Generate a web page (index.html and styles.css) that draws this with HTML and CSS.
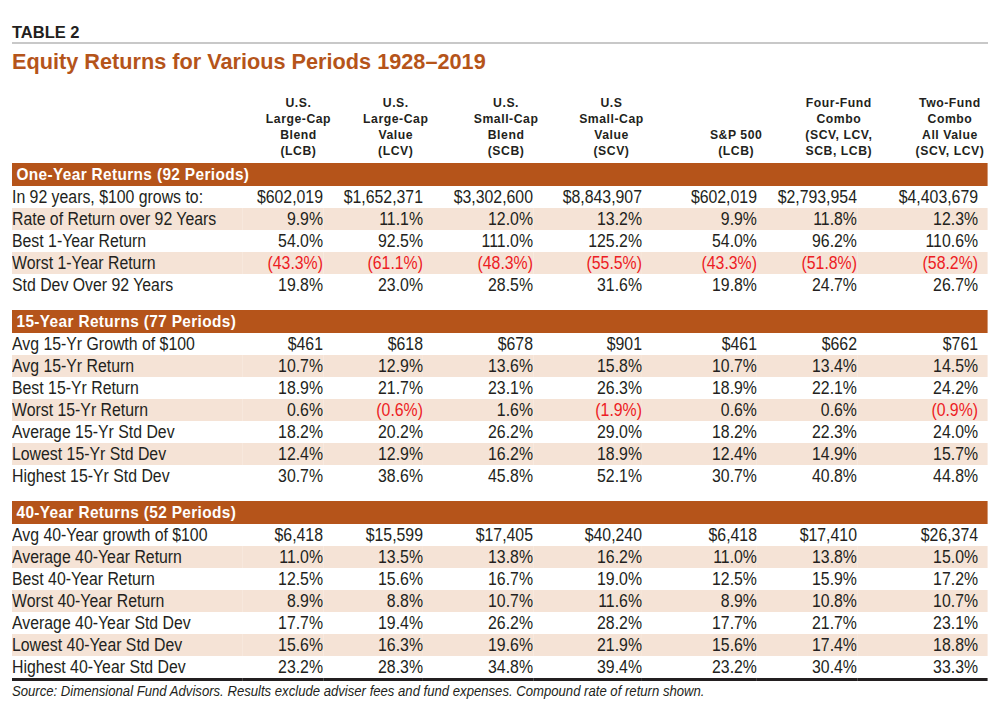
FILE: index.html
```html
<!DOCTYPE html>
<html>
<head>
<meta charset="utf-8">
<link rel="stylesheet" href="styles.css">
</head>
<body>
<div class="page">
  <div class="kicker">TABLE 2</div>
  <h1 class="title">Equity Returns for Various Periods 1928–2019</h1>
  <div class="condensed">
  <table class="data">
    <colgroup>
      <col class="c-label"><col class="c1"><col class="c2"><col class="c3"><col class="c4"><col class="c5"><col class="c6"><col class="c7">
    </colgroup>
    <thead>
      <tr class="head">
        <th></th>
        <th class="h1"><span>U.S.<br>Large-Cap<br>Blend<br>(LCB)</span></th>
        <th><span>U.S.<br>Large-Cap<br>Value<br>(LCV)</span></th>
        <th><span>U.S.<br>Small-Cap<br>Blend<br>(SCB)</span></th>
        <th class="h4"><span>U.S<br>Small-Cap<br>Value<br>(SCV)</span></th>
        <th><span>S&amp;P 500<br>(LCB)</span></th>
        <th class="h6"><span>Four-Fund<br>Combo<br>(SCV, LCV,<br>SCB, LCB)</span></th>
        <th><span>Two-Fund<br>Combo<br>All Value<br>(SCV, LCV)</span></th>
      </tr>
    </thead>
    <tbody>
      <tr class="section"><td colspan="8">One-Year Returns (92 Periods)</td></tr>
      <tr><td>In 92 years, $100 grows to:</td><td>$602,019</td><td>$1,652,371</td><td>$3,302,600</td><td>$8,843,907</td><td>$602,019</td><td>$2,793,954</td><td>$4,403,679</td></tr>
      <tr class="alt"><td>Rate of Return over 92 Years</td><td>9.9%</td><td>11.1%</td><td>12.0%</td><td>13.2%</td><td>9.9%</td><td>11.8%</td><td>12.3%</td></tr>
      <tr><td>Best 1-Year Return</td><td>54.0%</td><td>92.5%</td><td>111.0%</td><td>125.2%</td><td>54.0%</td><td>96.2%</td><td>110.6%</td></tr>
      <tr class="alt"><td>Worst 1-Year Return</td><td class="neg">(43.3%)</td><td class="neg">(61.1%)</td><td class="neg">(48.3%)</td><td class="neg">(55.5%)</td><td class="neg">(43.3%)</td><td class="neg">(51.8%)</td><td class="neg">(58.2%)</td></tr>
      <tr><td>Std Dev Over 92 Years</td><td>19.8%</td><td>23.0%</td><td>28.5%</td><td>31.6%</td><td>19.8%</td><td>24.7%</td><td>26.7%</td></tr>
      <tr class="spacer"><td colspan="8"></td></tr>
      <tr class="section"><td colspan="8">15-Year Returns (77 Periods)</td></tr>
      <tr><td>Avg 15-Yr Growth of $100</td><td>$461</td><td>$618</td><td>$678</td><td>$901</td><td>$461</td><td>$662</td><td>$761</td></tr>
      <tr class="alt"><td>Avg 15-Yr Return</td><td>10.7%</td><td>12.9%</td><td>13.6%</td><td>15.8%</td><td>10.7%</td><td>13.4%</td><td>14.5%</td></tr>
      <tr><td>Best 15-Yr Return</td><td>18.9%</td><td>21.7%</td><td>23.1%</td><td>26.3%</td><td>18.9%</td><td>22.1%</td><td>24.2%</td></tr>
      <tr class="alt"><td>Worst 15-Yr Return</td><td>0.6%</td><td class="neg">(0.6%)</td><td>1.6%</td><td class="neg">(1.9%)</td><td>0.6%</td><td>0.6%</td><td class="neg">(0.9%)</td></tr>
      <tr><td>Average 15-Yr Std Dev</td><td>18.2%</td><td>20.2%</td><td>26.2%</td><td>29.0%</td><td>18.2%</td><td>22.3%</td><td>24.0%</td></tr>
      <tr class="alt"><td>Lowest 15-Yr Std Dev</td><td>12.4%</td><td>12.9%</td><td>16.2%</td><td>18.9%</td><td>12.4%</td><td>14.9%</td><td>15.7%</td></tr>
      <tr><td>Highest 15-Yr Std Dev</td><td>30.7%</td><td>38.6%</td><td>45.8%</td><td>52.1%</td><td>30.7%</td><td>40.8%</td><td>44.8%</td></tr>
      <tr class="spacer"><td colspan="8"></td></tr>
      <tr class="section"><td colspan="8">40-Year Returns (52 Periods)</td></tr>
      <tr><td>Avg 40-Year growth of $100</td><td>$6,418</td><td>$15,599</td><td>$17,405</td><td>$40,240</td><td>$6,418</td><td>$17,410</td><td>$26,374</td></tr>
      <tr class="alt"><td>Average 40-Year Return</td><td>11.0%</td><td>13.5%</td><td>13.8%</td><td>16.2%</td><td>11.0%</td><td>13.8%</td><td>15.0%</td></tr>
      <tr><td>Best 40-Year Return</td><td>12.5%</td><td>15.6%</td><td>16.7%</td><td>19.0%</td><td>12.5%</td><td>15.9%</td><td>17.2%</td></tr>
      <tr class="alt"><td>Worst 40-Year Return</td><td>8.9%</td><td>8.8%</td><td>10.7%</td><td>11.6%</td><td>8.9%</td><td>10.8%</td><td>10.7%</td></tr>
      <tr><td>Average 40-Year Std Dev</td><td>17.7%</td><td>19.4%</td><td>26.2%</td><td>28.2%</td><td>17.7%</td><td>21.7%</td><td>23.1%</td></tr>
      <tr class="alt"><td>Lowest 40-Year Std Dev</td><td>15.6%</td><td>16.3%</td><td>19.6%</td><td>21.9%</td><td>15.6%</td><td>17.4%</td><td>18.8%</td></tr>
      <tr class="last"><td>Highest 40-Year Std Dev</td><td>23.2%</td><td>28.3%</td><td>34.8%</td><td>39.4%</td><td>23.2%</td><td>30.4%</td><td>33.3%</td></tr>
    </tbody>
  </table>
  <p class="note">Source: Dimensional Fund Advisors. Results exclude adviser fees and fund expenses. Compound rate of return shown.</p>
  </div>
</div>
</body>
</html>
```
FILE: styles.css
```css
html, body {
  margin: 0;
  padding: 0;
  background: #ffffff;
}
.page {
  --sx: 0.905;
  padding: 23px 12px 0 12px;
  font-family: "Liberation Sans", Arial, Helvetica, sans-serif;
  color: #231f20;
  overflow: hidden;
}
.kicker {
  font-weight: bold;
  font-size: 16.5px;
  line-height: 17px;
  padding-top: 1px;
  padding-bottom: 1px;
  border-bottom: 2px solid #c8c8c8;
}
.title {
  margin: 5px 0 0 0;
  font-weight: bold;
  font-size: 21.7px;
  line-height: 26px;
  color: #b5541a;
}
/* condensed typeface emulation: the table block is narrowed horizontally */
.condensed {
  width: calc(976px / var(--sx));
  transform: scaleX(var(--sx));
  transform-origin: 0 0;
}
.data {
  width: 100%;
  border-collapse: collapse;
  table-layout: fixed;
  margin-top: 20px;
}
.c-label { width: calc(231px / var(--sx)); }
.c1 { width: calc(80px / var(--sx)); }
.c2 { width: calc(100px / var(--sx)); }
.c3 { width: calc(110px / var(--sx)); }
.c4 { width: calc(109px / var(--sx)); }
.c5 { width: calc(115px / var(--sx)); }
.c6 { width: calc(100px / var(--sx)); }
.c7 { width: calc(131px / var(--sx)); }
.head th {
  padding: 0 0 4px 0;
  vertical-align: bottom;
  text-align: right;
  font-weight: bold;
  font-size: 13.5px;
  line-height: 16px;
  letter-spacing: 0.6px;
}
.head th span {
  display: inline-block;
  text-align: center;
  margin-right: -6px;
}
.head th.h1 span { margin-right: -9px; }
.head th.h4 span { margin-right: -2px; }
.head th.h6 span { margin-right: -17px; }
.head th:last-child { padding-right: 10px; }
td {
  padding: 0;
  height: 22px;
  font-size: 17.5px;
  line-height: 22px;
  text-align: right;
  white-space: nowrap;
}
td:first-child { text-align: left; }
td:last-child { padding-right: 11px; }
tr.alt td { background: #f5e3d6; }
td.neg { color: #ed1c24; }
tr.section td {
  background: #b5541a;
  color: #ffffff;
  font-weight: bold;
  font-size: 17px;
  height: 23px;
  line-height: 23px;
  padding-left: 5px;
  text-align: left;
  letter-spacing: 0.4px;
}
tr.spacer td {
  height: 14px;
  padding: 0;
  line-height: 0;
}
tr.last td { border-bottom: 3px solid #231f20; }
.note {
  margin: 1px 0 0 0;
  font-style: italic;
  font-size: 14.5px;
  line-height: 18px;
}
```
